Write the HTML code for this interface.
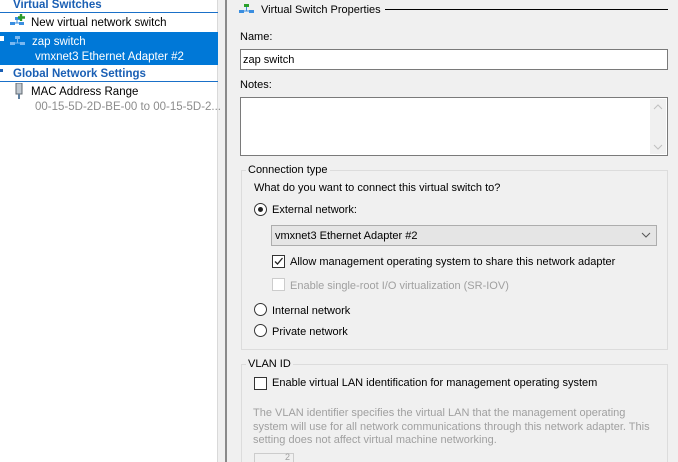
<!DOCTYPE html>
<html><head><style>
*{margin:0;padding:0;box-sizing:border-box}
html,body{width:678px;height:462px;overflow:hidden}
body{background:#f0f0f0;font-family:"Liberation Sans",sans-serif;font-size:11px;color:#000;position:relative}
.a{position:absolute;white-space:nowrap}
.hd{color:#1a5fb4;font-weight:bold;font-size:11.5px}
.gray{color:#8c8c8c}
.rad{position:absolute;width:13px;height:13px;border:1px solid #333;border-radius:50%;background:#fff}
.cb{position:absolute;width:13px;height:13px;border:1px solid #333;background:#fff}
.grp{position:absolute;border:1px solid #dcdcdc;}
</style></head><body>
<div class="a" style="left:0;top:0;width:218px;height:462px;background:#fff;border-right:1px solid #d9d9d9"></div>
<div class="a" style="left:225px;top:0;width:2px;height:462px;background:#8a8a8a"></div>

<div class="a hd" style="left:13px;top:-1px">Virtual Switches</div>
<div class="a" style="left:0;top:12px;width:218px;height:1px;background:#1a70c8"></div>
<svg class="a" style="left:10px;top:14px" width="16" height="14"><rect x="0" y="8" width="5" height="3" fill="#3a8ee0"/><rect x="9" y="8" width="5" height="3" fill="#3a8ee0"/><rect x="5" y="3" width="5" height="3" fill="#3a8ee0"/><path d="M7 6v3M2 9h10" stroke="#3a8ee0"/><path d="M11 0v7M8 3.5h7" stroke="#2a9a2a" stroke-width="2.4"/></svg>
<div class="a" style="left:31px;top:17px;font-size:11.5px">New virtual network switch</div>
<div class="a" style="left:0;top:32px;width:218px;height:33px;background:#0078d7"></div>
<div class="a" style="left:0;top:36px;width:4px;height:5px;background:#fff"></div>
<svg class="a" style="left:10px;top:35px" width="16" height="12"><rect x="0" y="7" width="5" height="3" fill="#7ab8f0"/><rect x="10" y="7" width="5" height="3" fill="#7ab8f0"/><rect x="5" y="1" width="5" height="3" fill="#7ab8f0"/><path d="M7.5 4v4M2 8h11" stroke="#7ab8f0"/></svg>
<div class="a" style="left:32px;top:36px;color:#fff;font-size:11.5px">zap switch</div>
<div class="a" style="left:35px;top:51px;color:#fff;font-size:11.5px">vmxnet3 Ethernet Adapter #2</div>
<div class="a" style="left:0;top:69px;width:3px;height:3px;background:#1a5fb4"></div>
<div class="a hd" style="left:13px;top:68px">Global Network Settings</div>
<div class="a" style="left:0;top:81px;width:218px;height:1px;background:#1a70c8"></div>
<svg class="a" style="left:14px;top:83px" width="10" height="17"><rect x="2" y="0" width="6" height="11" fill="#c0c8d0" stroke="#606870"/><rect x="4" y="11" width="2" height="5" fill="#6080a0"/></svg>
<div class="a" style="left:31px;top:86px;font-size:11.5px">MAC Address Range</div>
<div class="a gray" style="left:35px;top:101px;font-size:11.5px">00-15-5D-2D-BE-00 to 00-15-5D-2...</div>

<svg class="a" style="left:239px;top:3px" width="16" height="12"><rect x="0" y="7" width="5" height="3" fill="#3a8ee0"/><rect x="10" y="7" width="5" height="3" fill="#3a8ee0"/><rect x="5" y="1" width="5" height="3" fill="#2aa02a"/><path d="M7.5 4v4M2 8h11" stroke="#3a8ee0"/></svg>
<div class="a" style="left:261px;top:4px">Virtual Switch Properties</div>
<div class="a" style="left:385px;top:9px;width:283px;height:1px;background:#000"></div>
<div class="a" style="left:240px;top:31px">Name:</div>
<div class="a" style="left:240px;top:49px;width:428px;height:21px;background:#fff;border:1px solid #7a7a7a;padding:4px 2px">zap switch</div>
<div class="a" style="left:240px;top:79px">Notes:</div>
<div class="a" style="left:240px;top:97px;width:428px;height:59px;background:#fff;border:1px solid #7a7a7a"></div>
<div class="a" style="left:650px;top:99px;width:16px;height:55px;background:#f0f0f0"></div>
<svg class="a" style="left:652px;top:103px" width="12" height="48"><path d="M2 6l4-4 4 4M2 42l4 4 4-4" stroke="#c0c0c0" fill="none"/></svg>

<div class="grp" style="left:241px;top:170px;width:427px;height:180px"></div>
<div class="a" style="left:246px;top:164px;background:#f0f0f0;padding:0 2px">Connection type</div>
<div class="a" style="left:254px;top:182px">What do you want to connect this virtual switch to?</div>
<div class="rad" style="left:254px;top:203px"></div><div class="a" style="left:258px;top:207px;width:5px;height:5px;border-radius:50%;background:#222"></div>
<div class="a" style="left:272px;top:204px">External network:</div>
<div class="a" style="left:271px;top:225px;width:386px;height:21px;background:#e5e5e5;border:1px solid #adadad;padding:4px 3px">vmxnet3 Ethernet Adapter #2</div>
<svg class="a" style="left:641px;top:232px" width="10" height="6"><path d="M1 1l4 4 4-4" stroke="#555" fill="none"/></svg>
<div class="cb" style="left:272px;top:255px"></div>
<svg class="a" style="left:273px;top:256px" width="11" height="11"><path d="M2 5.5l2.5 2.5 5-6" stroke="#222" fill="none" stroke-width="1.3"/></svg>
<div class="a" style="left:290px;top:256px">Allow management operating system to share this network adapter</div>
<div class="cb" style="left:272px;top:278px;border-color:#ccc"></div>
<div class="a" style="left:290px;top:280px;color:#a0a0a0">Enable single-root I/O virtualization (SR-IOV)</div>
<div class="rad" style="left:254px;top:303px"></div>
<div class="a" style="left:272px;top:305px">Internal network</div>
<div class="rad" style="left:254px;top:324px"></div>
<div class="a" style="left:272px;top:326px">Private network</div>

<div class="grp" style="left:241px;top:364px;width:427px;height:110px"></div>
<div class="a" style="left:246px;top:358px;background:#f0f0f0;padding:0 2px">VLAN ID</div>
<div class="cb" style="left:254px;top:377px"></div>
<div class="a" style="left:272px;top:377px">Enable virtual LAN identification for management operating system</div>
<div class="a" style="left:253px;top:407px;color:#a0a0a0;line-height:13.5px;white-space:normal;width:400px">The VLAN identifier specifies the virtual LAN that the management operating system will use for all network communications through this network adapter. This setting does not affect virtual machine networking.</div>
<div class="a" style="left:254px;top:453px;width:40px;height:14px;border:1px solid #ccc;background:#f0f0f0"></div>
<div class="a" style="left:285px;top:452px;color:#a0a0a0;font-size:9px">2</div>
</body></html>
